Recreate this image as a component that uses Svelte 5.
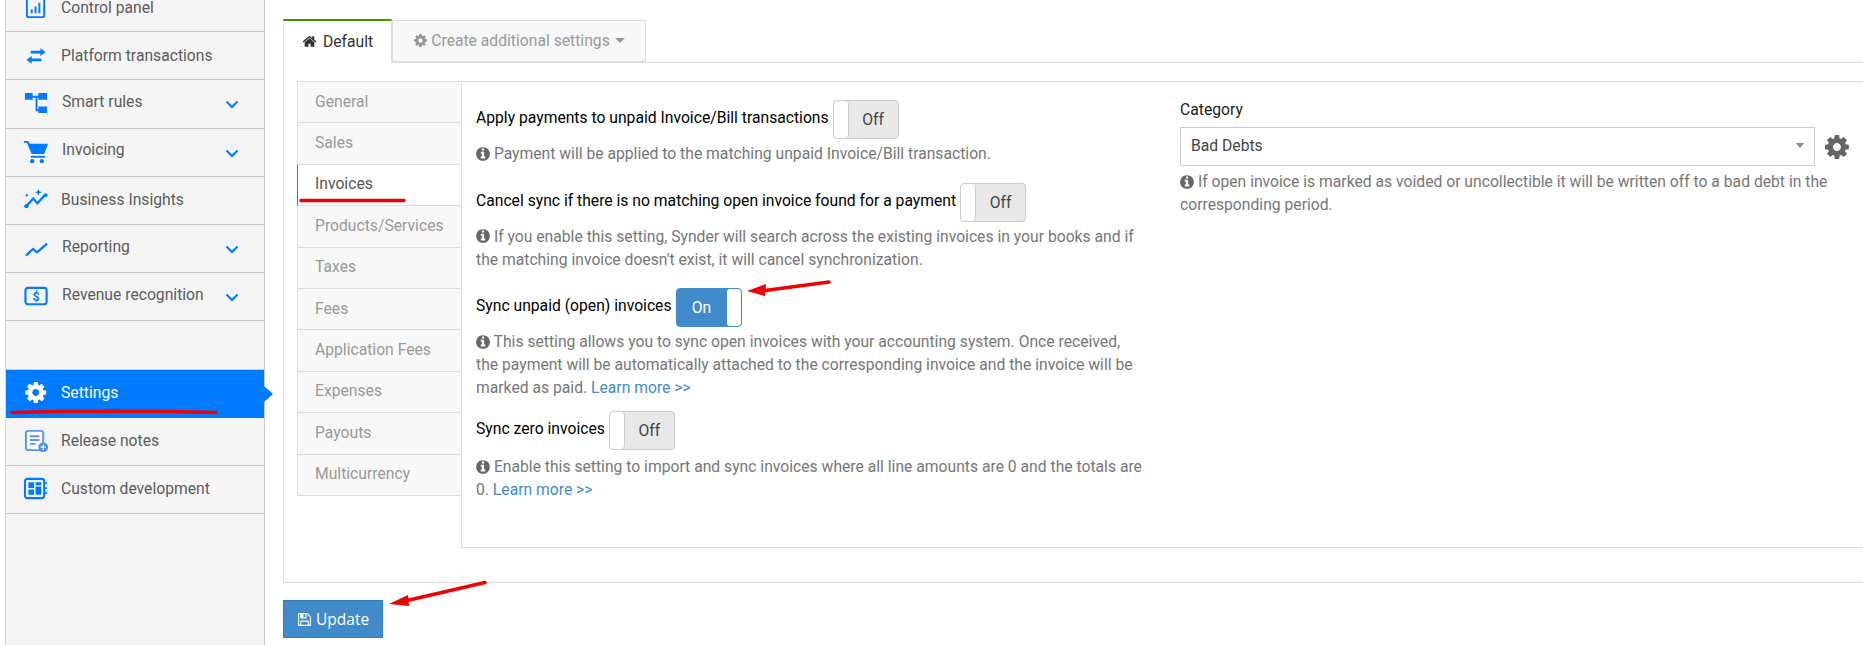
<script>
  const cog = "M1152 896q0-106-75-181t-181-75-181 75-75 181 75 181 181 75 181-75 75-181zm512-109v222q0 12-8 23t-20 13l-185 28q-19 54-39 91 35 50 107 138 10 12 10 25t-9 23q-27 37-99 108t-94 71q-12 0-26-9l-138-108q-44 23-91 38-16 136-29 186-7 28-36 28h-222q-14 0-24.500-8.500t-11.500-21.500l-28-184q-49-16-90-37l-141 107q-10 9-25 9-14 0-25-11-126-114-165-168-7-10-7-23 0-12 8-23 15-21 51-66.500t54-70.500q-27-50-41-99l-183-27q-13-2-21-12.500t-8-23.500v-222q0-12 8-23t19-13l186-28q14-46 39-92-40-57-107-138-10-12-10-24 0-10 9-23 26-36 98.500-107.500t94.500-71.500q13 0 26 10l138 107q44-23 91-38 16-136 29-186 7-28 36-28h222q14 0 24.500 8.500t11.500 21.500l28 184q49 16 90 37l142-107q9-9 24-9 13 0 25 10 129 119 165 170 7 8 7 22 0 12-8 23-15 21-51 66.500t-54 70.500q26 50 41 98l183 28q13 2 21 12.500t8 23.500z";
  const info = "M1152 1376v-160q0-14-9-23t-23-9h-96v-512q0-14-9-23t-23-9h-320q-14 0-23 9t-9 23v160q0 14 9 23t23 9h96v320h-96q-14 0-23 9t-9 23v160q0 14 9 23t23 9h448q14 0 23-9t9-23zm-128-896v-160q0-14-9-23t-23-9h-192q-14 0-23 9t-9 23v160q0 14 9 23t23 9h192q14 0 23-9t9-23zm640 416q0 209-103 385.500t-279.500 279.500-385.500 103-385.500-103-279.500-279.500-103-385.500 103-385.500 279.500-279.500 385.500-103 385.500 103 279.500 279.500 103 385.500z";
  const home = "M1472 992v480q0 26-19 45t-45 19h-384v-384h-256v384h-384q-26 0-45-19t-19-45v-480q0-1 .5-3t.5-3l575-474 575 474q1 2 1 6zm223-69l-62 74q-8 9-21 11h-3q-13 0-21-7l-692-577-692 577q-12 8-24 7-13-2-21-11l-62-74q-8-10-7-23.500t11-21.500l719-599q32-26 76-26t76 26l244 204v-195q0-14 9-23t23-9h192q14 0 23 9t9 23v408l219 182q10 8 11 21.500t-7 23.500z";
  const save = "M512 1536h768v-384h-768v384zm896 0h128v-896q0-14-10-38.500t-20-34.500l-281-281q-10-10-34-20t-39-10v416q0 40-28 68t-68 28h-576q-40 0-68-28t-28-68v-416h-128v1280h128v-416q0-40 28-68t68-28h832q40 0 68 28t28 68v416zm-384-928v-320q0-13-9.500-22.500t-22.500-9.500h-192q-13 0-22.500 9.500t-9.500 22.500v320q0 13 9.500 22.500t22.500 9.500h192q13 0 22.500-9.500t9.500-22.500zm640 32v928q0 40-28 68t-68 28h-1344q-40 0-68-28t-28-68v-1344q0-40 28-68t68-28h928q40 0 88 20t76 48l280 280q28 28 48 76t20 88z";

  const menu = [
    { id: 'panel', label: 'Control panel' },
    { id: 'transactions', label: 'Platform transactions' },
    { id: 'rules', label: 'Smart rules', sub: true },
    { id: 'invoicing', label: 'Invoicing', sub: true },
    { id: 'insights', label: 'Business Insights' },
    { id: 'reporting', label: 'Reporting', sub: true },
    { id: 'revenue', label: 'Revenue recognition', sub: true },
    { id: 'gap', label: '' },
    { id: 'settings', label: 'Settings', active: true },
    { id: 'notes', label: 'Release notes' },
    { id: 'custom', label: 'Custom development' },
  ];

  const sections = ['General', 'Sales', 'Invoices', 'Products/Services', 'Taxes', 'Fees', 'Application Fees', 'Expenses', 'Payouts', 'Multicurrency'];

  const options = [
    { label: 'Apply payments to unpaid Invoice/Bill transactions', on: false, help: 'Payment will be applied to the matching unpaid Invoice/Bill transaction.' },
    { label: 'Cancel sync if there is no matching open invoice found for a payment', on: false, help: "If you enable this setting, Synder will search across the existing invoices in your books and if the matching invoice doesn't exist, it will cancel synchronization." },
    { label: 'Sync unpaid (open) invoices', on: true, help: 'This setting allows you to sync open invoices with your accounting system. Once received, the payment will be automatically attached to the corresponding invoice and the invoice will be marked as paid.', more: true },
    { label: 'Sync zero invoices', on: false, help: 'Enable this setting to import and sync invoices where all line amounts are 0 and the totals are 0.', more: true },
  ];
</script>

{#snippet fa(d, cls)}
  <svg class={cls} viewBox="0 0 1792 1792" aria-hidden="true"><path d={d} fill="currentColor" /></svg>
{/snippet}

{#snippet menuIcon(id)}
  <svg class="menu-icon" viewBox="0 0 26 26" aria-hidden="true">
    {#if id === 'panel'}
      <rect x="3" y="3" width="18" height="20" rx="2" fill="none" stroke="currentColor" stroke-width="2" />
      <path d="M7 15h2v4H7zM11 12h2v7h-2zM15 8h2v11h-2z" fill="currentColor" />
    {:else if id === 'transactions'}
      <path d="M7 8h10V5.500l5.500 4-5.500 4V11H7zM18 16v3H8v2.500l-5.500-4 5.500-4V16z" fill="currentColor" />
    {:else if id === 'rules'}
      <path d="M1 2h8v7H1zM15 2h9v7h-9zM15 16h9v7h-9z" fill="currentColor" />
      <path d="M8 6h8M13 6v14h3" fill="none" stroke="currentColor" stroke-width="2" />
    {:else if id === 'invoicing'}
      <path d="M0 2h4.500l1.400 3H25l-4 10.500H8L3 4H0z" fill="currentColor" />
      <path d="M7 18.500h15" stroke="currentColor" stroke-width="2" />
      <circle cx="8.500" cy="23" r="2.300" fill="currentColor" /><circle cx="18.500" cy="23" r="2.300" fill="currentColor" />
    {:else if id === 'insights'}
      <path d="M2.500 20l7-8 4.500 5 7.500-8.500" fill="none" stroke="currentColor" stroke-width="2.400" />
      <circle cx="2.500" cy="20" r="2.200" fill="currentColor" /><circle cx="22.500" cy="8.500" r="2" fill="currentColor" />
      <path d="M15 2l1 2.500 2.500 1-2.500 1-1 2.500-1-2.500-2.500-1 2.500-1zM3 6.500l.6 1.400 1.400.6-1.400.6-.6 1.400-.6-1.400-1.400-.6 1.400-.6z" fill="currentColor" />
    {:else if id === 'reporting'}
      <path d="M2 20.500l7.500-7 4 3.500L24 8" fill="none" stroke="currentColor" stroke-width="2.400" />
    {:else if id === 'revenue'}
      <rect x="1.500" y="4" width="22" height="17" rx="2.500" fill="none" stroke="currentColor" stroke-width="2.200" />
      <text x="12.500" y="17.500" text-anchor="middle" class="dollar">$</text>
    {:else if id === 'settings'}
      <path d={cog} transform="translate(-.5 .3) scale(.0142)" fill="currentColor" />
    {:else if id === 'notes'}
      <rect x="2" y="3" width="18" height="20" rx="2.500" fill="#fff" stroke="#5b93ee" stroke-width="2" />
      <path d="M6 8.500h10M6 12.500h10M6 16.500h6" stroke="#5b93ee" stroke-width="2" />
      <circle cx="20" cy="20" r="5" fill="#4c8cf0" />
      <path d="M20 17.200v5.600M17.200 20h5.600" stroke="#fff" stroke-width="1.300" />
    {:else if id === 'custom'}
      <rect x="1" y="3" width="20" height="20" rx="2.500" fill="none" stroke="currentColor" stroke-width="2.200" />
      <path d="M4.500 6.500h6v6h-6zM12 6.500h6v3h-6zM4.500 14h6v5.500h-6zM12 11h6v8.500h-6z" fill="currentColor" />
      <path d="M22 7.500h2M22 12.500h2M22 17.500h2" stroke="currentColor" stroke-width="1.800" />
    {/if}
  </svg>
{/snippet}

<div class="page">
  <aside class="sidebar">
    {#each menu as item (item.id)}
      <div class="menu-row" class:active={item.active} class:sub={item.sub}>
        {#if item.label}
          <span class="icon-slot">{@render menuIcon(item.id)}</span>
          <span class="menu-label">{item.label}</span>
        {/if}
        {#if item.sub}
          <svg class="chevron" viewBox="0 0 14 9" aria-hidden="true"><path d="M1.500 1.500L7 7l5.500-5.500" fill="none" stroke="currentColor" stroke-width="2" /></svg>
        {/if}
      </div>
    {/each}
  </aside>

  <main class="content">
    <div class="tabs">
      <div class="tab current">{@render fa(home, 'tab-icon')} Default</div>
      <div class="tab muted">{@render fa(cog, 'tab-icon')} Create additional settings <span class="caret"></span></div>
    </div>

    <div class="tab-body">
      <nav class="sections">
        {#each sections as section}
          <div class="section" class:selected={section === 'Invoices'}>{section}</div>
        {/each}
      </nav>

      <section class="settings">
        <div class="options">
          {#each options as opt}
            <div class="option">
              <div class="option-head">
                <span class="option-label">{opt.label}</span>
                <div class="toggle" class:on={opt.on}>
                  <span class="state">{opt.on ? 'On' : 'Off'}</span>
                  <span class="handle"></span>
                </div>
              </div>
              <p class="help">{@render fa(info, 'info')} {opt.help}{#if opt.more}{' '}<a href="#more">Learn more &gt;&gt;</a>{/if}</p>
            </div>
          {/each}
        </div>

        <div class="category">
          <div class="category-label">Category</div>
          <div class="select-row">
            <div class="select">
              <span>Bad Debts</span>
              <span class="select-caret"></span>
            </div>
            {@render fa(cog, 'select-gear')}
          </div>
          <p class="help">{@render fa(info, 'info')} If open invoice is marked as voided or uncollectible it will be written off to a bad debt in the corresponding period.</p>
        </div>
      </section>
    </div>

    <button class="update">{@render fa(save, 'save')} Update</button>
  </main>

  <!-- red annotations drawn on top of the screenshot -->
  <svg class="marks" viewBox="0 0 1863 645" aria-hidden="true">
    <path d="M12 412.500Q110 410 216 412.500M301 200.500H404" fill="none" stroke="#f00000" stroke-width="3.500" stroke-linecap="round" />
    <path d="M829 282L765 290.500" stroke="#f00000" stroke-width="3.500" stroke-linecap="round" />
    <path d="M747 291L766 284L765 296Z" fill="#f00000" />
    <path d="M485 582.500L405 601" stroke="#f00000" stroke-width="3.500" stroke-linecap="round" />
    <path d="M389 604L408 595L409 606Z" fill="#f00000" />
  </svg>
</div>

<style>
  :global(body) {
    margin: 0;
    overflow: hidden;
    background: #fff;
  }

  .page {
    position: relative;
    display: flex;
    width: 1863px;
    height: 645px;
    overflow: hidden;
    font-family: Roboto, "Liberation Sans", sans-serif;
    font-size: 15.700px;
  }

  .sidebar {
    flex: none;
    box-sizing: border-box;
    width: 260px;
    height: 661px;
    margin: -16px 0 0 5px;
    background: #f5f5f5;
    border-right: 1px solid #c6c6c8;
    border-left: 1px solid #d8d8d8;
  }

  .menu-row {
    position: relative;
    display: flex;
    align-items: center;
    box-sizing: border-box;
    height: 48.200px;
    padding-bottom: 1px;
    border-bottom: 1.500px solid #c8c8ca;
    color: #5c5c5c;
  }

  .menu-row.active {
    background: #007bff;
    color: #fff;
    border-bottom-color: #007bff;
  }

  .menu-row.active::after {
    content: '';
    position: absolute;
    left: 100%;
    top: 16px;
    border-left: 9px solid #007bff;
    border-top: 8px solid transparent;
    border-bottom: 8px solid transparent;
  }

  .icon-slot {
    display: flex;
    flex: none;
    justify-content: center;
    box-sizing: border-box;
    width: 55px;
    padding-left: 5px;
    color: #007bff;
  }

  .active .icon-slot {
    color: #fff;
  }

  .menu-icon {
    width: 25px;
    height: 25px;
  }

  .sub .menu-label {
    position: relative;
    top: -2px;
    left: 1px;
  }

  .chevron {
    position: absolute;
    right: 25px;
    top: 20px;
    width: 14px;
    height: 9px;
    color: #007bff;
  }

  .dollar {
    font: 700 13px Roboto, sans-serif;
    fill: currentColor;
  }

  .content {
    flex: 1;
    min-width: 0;
    padding: 19px 0 0 18px;
  }

  .tabs {
    display: flex;
    align-items: flex-end;
    height: 43px;
    border-bottom: 1px solid #ddd;
  }

  .tab {
    display: flex;
    align-items: center;
    justify-content: center;
    box-sizing: border-box;
    padding-bottom: 2px;
  }

  .tab.current {
    gap: 6px;
    width: 109px;
    height: 44px;
    margin-bottom: -1px;
    background: #fff;
    border-top: 2px solid #3f9400;
    border-left: 1px solid #ddd;
    border-right: 1px solid #ddd;
    color: #333;
  }

  .tab.muted {
    gap: 3px;
    width: 254px;
    height: 43px;
    background: #f8f8f8;
    border: 1px solid #ddd;
    border-bottom-width: 2px;
    margin-bottom: -1px;
    color: #999;
  }

  .tab-icon {
    width: 15px;
    height: 15px;
  }

  .caret {
    width: 0;
    height: 0;
    margin-left: 2px;
    border-top: 5px solid #999;
    border-left: 5px solid transparent;
    border-right: 5px solid transparent;
  }

  .tab-body {
    display: flex;
    align-items: flex-start;
    box-sizing: border-box;
    height: 520px;
    padding: 18px 0 0 13px;
    border-left: 1px solid #ddd;
    border-bottom: 1.500px solid #ddd;
  }

  .sections {
    flex: none;
    box-sizing: border-box;
    width: 165px;
    border-top: 1px solid #ddd;
  }

  .section {
    display: flex;
    align-items: center;
    box-sizing: border-box;
    height: 41.400px;
    padding: 0 0 2px 17px;
    background: #f8f8f8;
    border-left: 1px solid #ddd;
    border-right: 1px solid #ddd;
    border-bottom: 1.500px solid #ddd;
    color: #999;
  }

  .section.selected {
    background: #fff;
    border-left: 1.500px solid #3f9400;
    border-right: 1px solid #fff;
    border-bottom-color: #ddd;
    color: #555;
    padding-bottom: 3px;
  }

  .settings {
    flex: 1;
    display: flex;
    box-sizing: border-box;
    height: 467px;
    margin-left: -1px;
    border-top: 1px solid #ddd;
    border-bottom: 1.500px solid #ddd;
    border-left: 1px solid #ddd;
    padding: 18px 0 0 14px;
  }

  .options {
    flex: none;
    width: 670px;
  }

  .option {
    margin-bottom: 17px;
  }

  .option:nth-child(3) {
    margin-bottom: 11.500px;
  }

  .option:nth-child(4) .help {
    margin-top: 6px;
  }

  .option-head {
    display: flex;
    align-items: center;
    gap: 4px;
  }

  .option-label {
    padding-bottom: 4px;
    color: #000;
  }

  .toggle {
    display: flex;
    flex: none;
    flex-direction: row-reverse;
    box-sizing: border-box;
    width: 66px;
    height: 39px;
    overflow: hidden;
    background: #e8e8e8;
    border: 1px solid #ccc;
    border-radius: 4px;
  }

  .toggle.on {
    flex-direction: row;
    background: #428bca;
    border-color: #428bca;
  }

  .state {
    flex: 1;
    align-self: center;
    text-align: center;
    color: #444;
  }

  .on .state {
    color: #fff;
  }

  .handle {
    flex: none;
    width: 14px;
    background: #fff;
    border-right: 1px solid #ccc;
    border-radius: 4px;
  }

  .on .handle {
    border-right: none;
    border-radius: 3px;
  }

  .help {
    margin: 4px 0 0;
    line-height: 22.800px;
    color: #777;
  }

  .help a {
    color: #428bca;
    text-decoration: none;
  }

  .info {
    width: 16px;
    height: 16px;
    margin: 0 -1px;
    vertical-align: -2.500px;
    color: #666;
  }

  .category {
    flex: none;
    width: 671px;
    margin-left: 34px;
  }

  .category-label {
    height: 27px;
    line-height: 20px;
    color: #222;
  }

  .select-row {
    display: flex;
    align-items: center;
    gap: 8px;
    margin-bottom: 5px;
  }

  .select {
    display: flex;
    align-items: center;
    justify-content: space-between;
    box-sizing: border-box;
    width: 638px;
    height: 39px;
    padding: 0 10px 2px;
    border: 1.500px solid #ccc;
    color: #444;
  }

  .select-caret {
    border-top: 5px solid #888;
    border-left: 4px solid transparent;
    border-right: 4px solid transparent;
  }

  .select-gear {
    width: 28px;
    height: 28px;
    color: #666;
  }

  .update {
    display: flex;
    align-items: center;
    gap: 4px;
    box-sizing: border-box;
    width: 100px;
    height: 38px;
    margin-top: 17px;
    padding: 0 0 0 13px;
    background: #428bca;
    border: 1px solid #357ebd;
    color: #fff;
    font: 15.500px "Open Sans", sans-serif;
  }

  .save {
    width: 15px;
    height: 15px;
  }

  .marks {
    position: absolute;
    inset: 0;
    width: 1863px;
    height: 645px;
    pointer-events: none;
  }
</style>
